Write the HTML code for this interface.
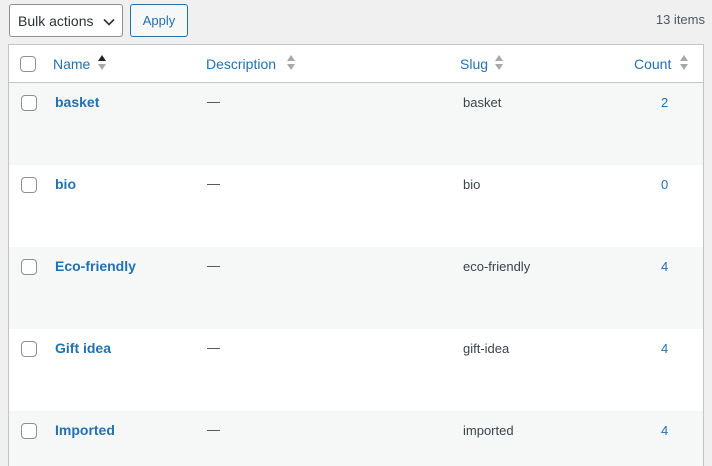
<!DOCTYPE html>
<html><head><style>
html,body{margin:0;width:712px;height:466px;overflow:hidden}
body{background:#f0f0f1;font-family:"Liberation Sans",sans-serif;position:relative;color:#3c434a}
.a{position:absolute}
.sel{left:9px;top:4px;width:114px;height:33px;border:1px solid #8c8f94;border-radius:3px;background:#fff;font-size:14px;color:#2c3338;box-sizing:border-box}
.btn{left:130px;top:4px;width:58px;height:33px;border:1px solid #2271b1;border-radius:3px;background:#f6f7f7;color:#2271b1;font-size:13px;box-sizing:border-box;text-align:center;line-height:31px}
.tbl{left:8px;top:44px;width:696px;height:422px;border:1px solid #c3c4c7;border-bottom:none;background:#fff;box-sizing:border-box}
.hd{left:9px;top:45px;width:694px;height:37px;border-bottom:1px solid #c3c4c7;background:#fff}
.row{left:9px;width:694px;height:82px}
.cb{width:14px;height:14px;border:1px solid #8c8f94;border-radius:4px;background:#fff}
.h{color:#2271b1;font-size:14px}
.n{color:#2271b1;font-size:14px;font-weight:bold}
.t{font-size:13px}
.ar{width:0;height:0;border-left:4px solid transparent;border-right:4px solid transparent}
</style></head><body>
<div class="a sel"><span class="a" style="left:8px;top:8px">Bulk actions</span>
<svg class="a" style="left:93px;top:13px" width="12" height="8"><path d="M1 1.5L6 6.5L11 1.5" stroke="#2c3338" stroke-width="1.6" fill="none"/></svg></div>
<div class="a btn">Apply</div>
<div class="a t" style="right:7px;top:12px;color:#50575e">13 items</div>
<div class="a tbl"></div>
<div class="a hd"></div>
<div class="a cb" style="left:20px;top:56px"></div>
<div class="a h" style="left:53px;top:56px">Name</div>
<div class="a ar" style="left:98px;top:55px;border-bottom:6px solid #1d2327"></div>
<div class="a ar" style="left:98px;top:64px;border-top:6px solid #a7aaad"></div>
<div class="a h" style="left:206px;top:56px">Description</div>
<div class="a ar" style="left:287px;top:55px;border-bottom:6px solid #a7aaad"></div>
<div class="a ar" style="left:287px;top:64px;border-top:6px solid #a7aaad"></div>
<div class="a h" style="left:460px;top:56px">Slug</div>
<div class="a ar" style="left:495px;top:55px;border-bottom:6px solid #a7aaad"></div>
<div class="a ar" style="left:495px;top:64px;border-top:6px solid #a7aaad"></div>
<div class="a h" style="left:634px;top:56px">Count</div>
<div class="a ar" style="left:680px;top:55px;border-bottom:6px solid #a7aaad"></div>
<div class="a ar" style="left:680px;top:64px;border-top:6px solid #a7aaad"></div>

<div class="a row" style="top:83px;background:#f6f7f7"></div>
<div class="a row" style="top:165px;background:#fff"></div>
<div class="a row" style="top:247px;background:#f6f7f7"></div>
<div class="a row" style="top:329px;background:#fff"></div>
<div class="a row" style="top:411px;height:55px;background:#f6f7f7"></div>

<div class="a cb" style="left:21px;top:95px"></div><div class="a n" style="left:55px;top:94px">basket</div><div class="a t" style="left:207px;top:94px">—</div><div class="a t" style="left:463px;top:95px">basket</div><div class="a t" style="left:661px;top:95px;color:#2271b1">2</div>
<div class="a cb" style="left:21px;top:177px"></div><div class="a n" style="left:55px;top:176px">bio</div><div class="a t" style="left:207px;top:176px">—</div><div class="a t" style="left:463px;top:177px">bio</div><div class="a t" style="left:661px;top:177px;color:#2271b1">0</div>
<div class="a cb" style="left:21px;top:259px"></div><div class="a n" style="left:55px;top:258px">Eco-friendly</div><div class="a t" style="left:207px;top:258px">—</div><div class="a t" style="left:463px;top:259px">eco-friendly</div><div class="a t" style="left:661px;top:259px;color:#2271b1">4</div>
<div class="a cb" style="left:21px;top:341px"></div><div class="a n" style="left:55px;top:340px">Gift idea</div><div class="a t" style="left:207px;top:340px">—</div><div class="a t" style="left:463px;top:341px">gift-idea</div><div class="a t" style="left:661px;top:341px;color:#2271b1">4</div>
<div class="a cb" style="left:21px;top:423px"></div><div class="a n" style="left:55px;top:422px">Imported</div><div class="a t" style="left:207px;top:422px">—</div><div class="a t" style="left:463px;top:423px">imported</div><div class="a t" style="left:661px;top:423px;color:#2271b1">4</div>
</body></html>
